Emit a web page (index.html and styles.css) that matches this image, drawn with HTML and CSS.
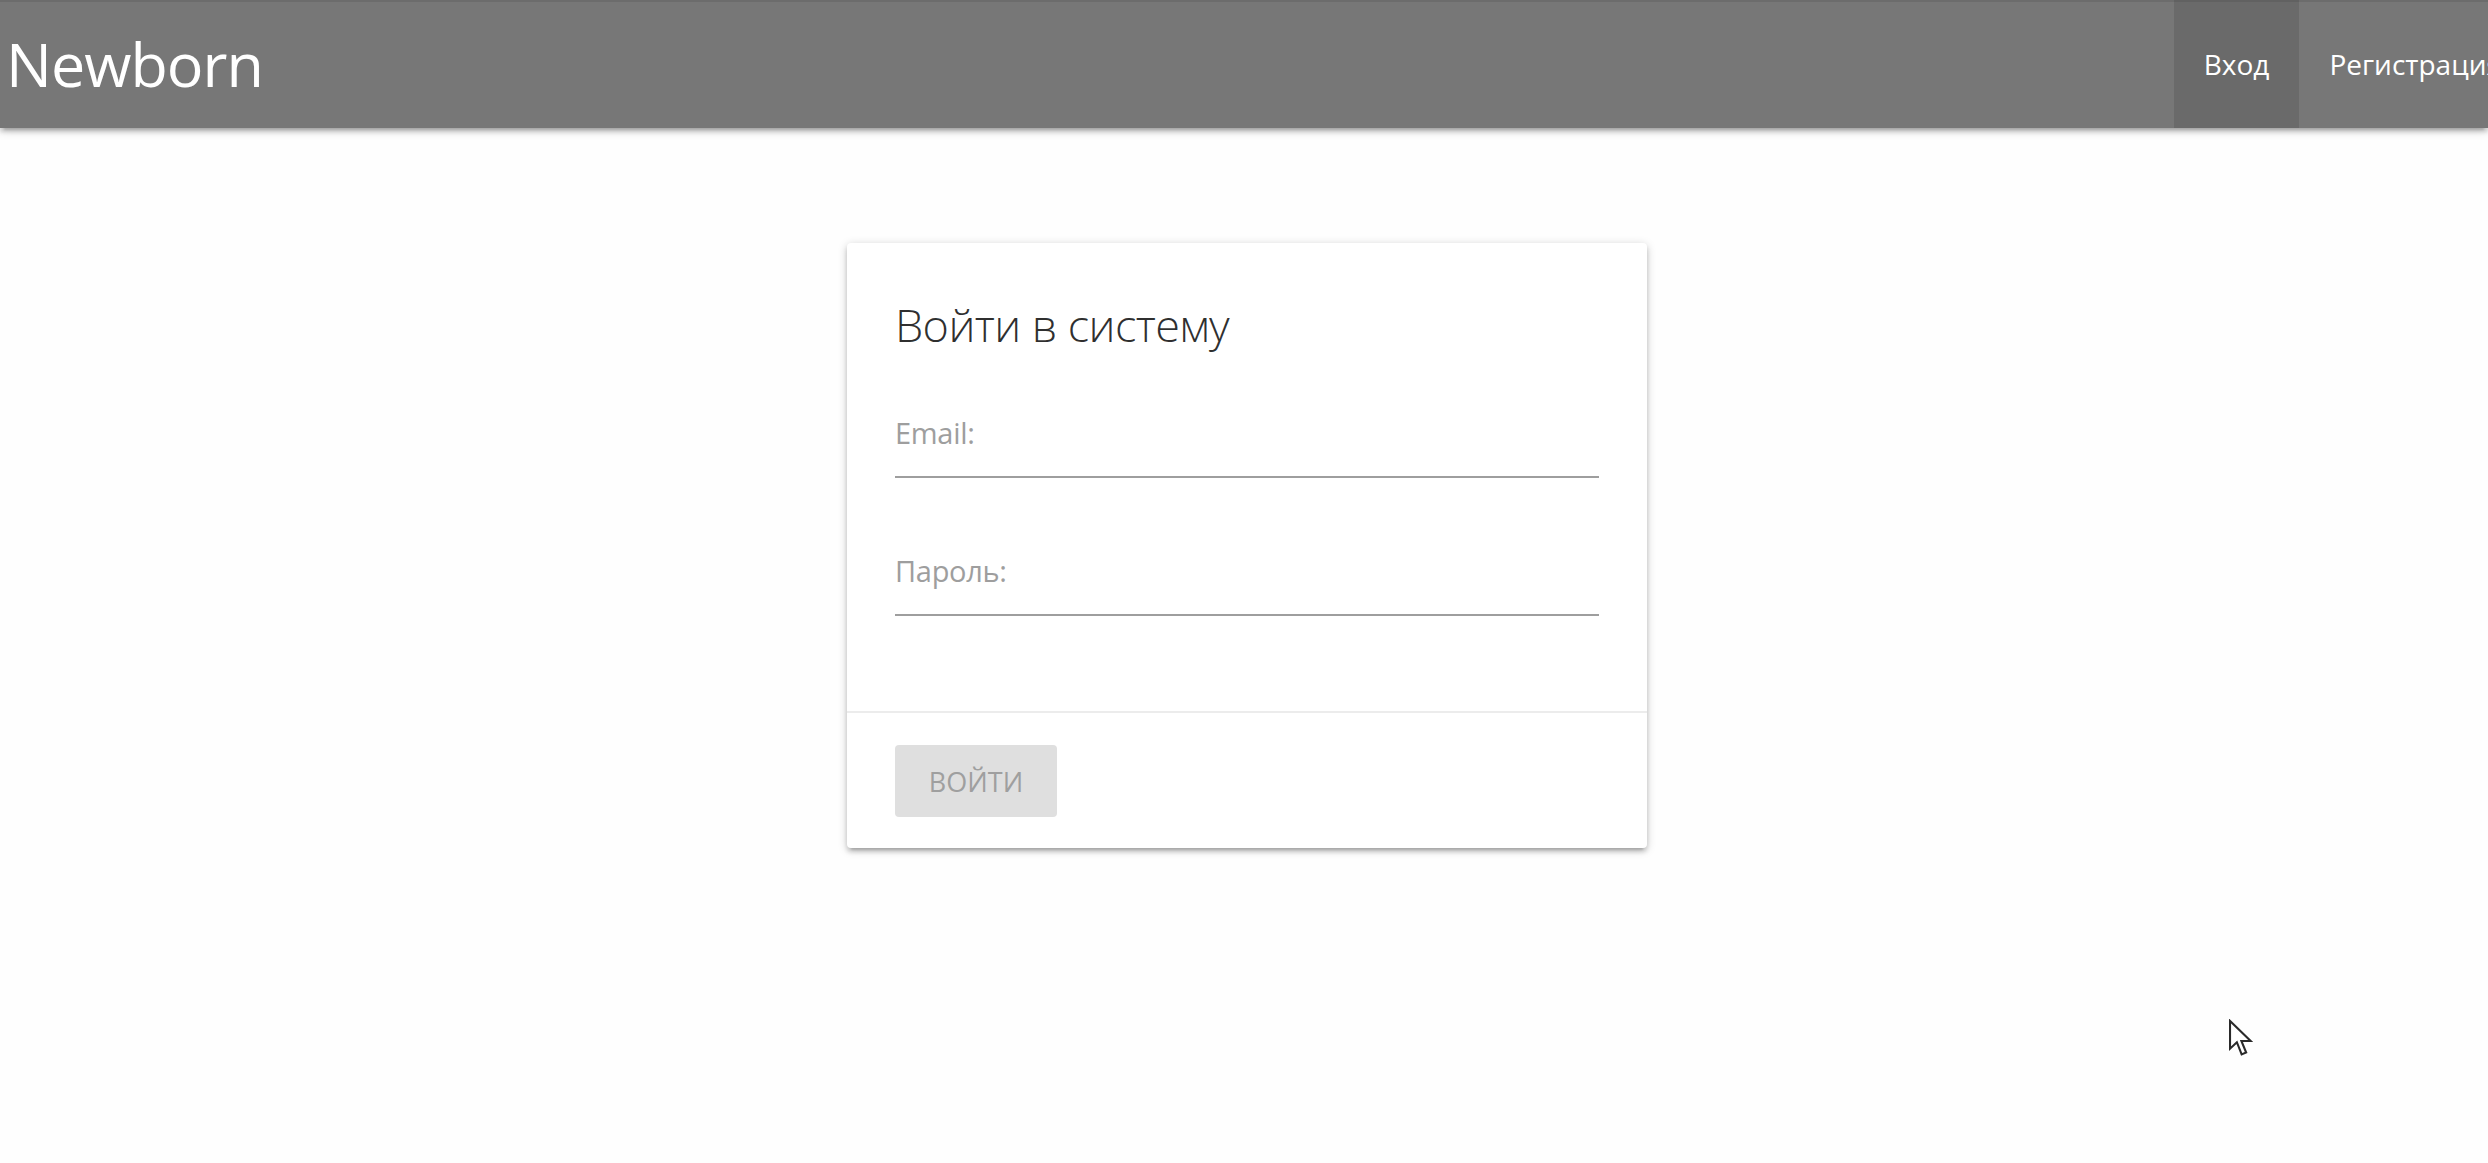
FILE: index.html
```html
<!DOCTYPE html>
<html lang="ru">
<head>
<meta charset="utf-8">
<title>Newborn</title>
<link rel="stylesheet" href="styles.css">
</head>
<body>
<nav class="navbar">
  <a class="brand" href="#">Newborn</a>
  <ul class="nav-links">
    <li class="active"><a href="#">Вход</a></li>
    <li><a href="#">Регистрация</a></li>
  </ul>
</nav>
<main class="page">
  <form class="card">
    <div class="card-content">
      <span class="card-title">Войти в систему</span>
      <div class="field field-email">
        <label for="email">Email:</label>
        <input id="email" type="email">
      </div>
      <div class="field field-pass">
        <label for="pass">Пароль:</label>
        <input id="pass" type="password">
      </div>
    </div>
    <div class="card-action">
      <button class="btn" type="button" disabled>Войти</button>
    </div>
  </form>
</main>
<svg class="cursor" width="26" height="40" viewBox="0 0 20 31">
  <path d="M1.5 1.5 L1.5 23 L6.8 18 L10.5 27.5 L14 26 L10.3 17 L17.5 17 Z" fill="#ffffff" stroke="#2a2a2a" stroke-width="1.6" stroke-linejoin="miter"/>
</svg>
</body>
</html>
```

FILE: styles.css
```css
html, body {
  margin: 0;
  padding: 0;
  background: #fefefe;
  overflow: hidden;
}
body {
  font-family: "Open Sans", "Noto Sans", "Liberation Sans", sans-serif;
  height: 1163px;
  position: relative;
}
.navbar {
  display: flex;
  align-items: stretch;
  height: 128px;
  background: #777777;
  box-shadow: inset 0 2px 0 #6c6c6c, 0 4px 4px 0 rgba(0,0,0,.14), 0 6px 2px -4px rgba(0,0,0,.12), 0 2px 10px 0 rgba(0,0,0,.2);
  position: relative;
  z-index: 2;
}
.brand {
  color: #ffffff;
  text-decoration: none;
  font-size: 61px;
  line-height: 128px;
  padding-left: 6px;
  letter-spacing: -1px;
}
.nav-links {
  display: flex;
  list-style: none;
  margin: 0 -44px 0 auto;
  padding: 0;
}
.nav-links li {
  display: flex;
}
.nav-links a {
  color: #ffffff;
  text-decoration: none;
  font-size: 28px;
  line-height: 128px;
  padding: 0 30px;
  white-space: nowrap;
}
.nav-links li.active {
  background: rgba(0,0,0,.1);
}
.page {
  display: flex;
  justify-content: center;
  padding-top: 115px;
}
.card {
  width: 800px;
  margin-left: 6px;
  background: #ffffff;
  border-radius: 4px;
  box-shadow: 0 4px 4px 0 rgba(0,0,0,.14), 0 6px 2px -4px rgba(0,0,0,.12), 0 2px 10px 0 rgba(0,0,0,.2);
}
.card-content {
  padding: 50px 48px 95px;
}
.card-title {
  display: block;
  font-size: 45px;
  font-weight: 300;
  line-height: 64px;
  color: rgba(0,0,0,.82);
  letter-spacing: -0.6px;
}
.field {
  display: flex;
  flex-direction: column;
}
.field label {
  font-size: 29px;
  line-height: 40px;
  color: #9e9e9e;
  letter-spacing: -0.3px;
}
.field input {
  height: 23px;
  border: none;
  border-bottom: 2px solid #9e9e9e;
  padding: 0;
  margin: 0;
  background: transparent;
  outline: none;
}
.field-email {
  margin-top: 56px;
}
.field-pass {
  margin-top: 73px;
}
.card-action {
  border-top: 2px solid rgba(160,160,160,.2);
  padding: 32px 48px 31px;
}
.btn {
  display: block;
  height: 72px;
  width: 162px;
  border: none;
  border-radius: 4px;
  background: #dfdfdf;
  color: #9f9f9f;
  font-family: inherit;
  font-size: 27px;
  text-transform: uppercase;
  letter-spacing: 0;
  padding: 0;
}
.cursor {
  position: absolute;
  left: 2228px;
  top: 1019px;
}
```
